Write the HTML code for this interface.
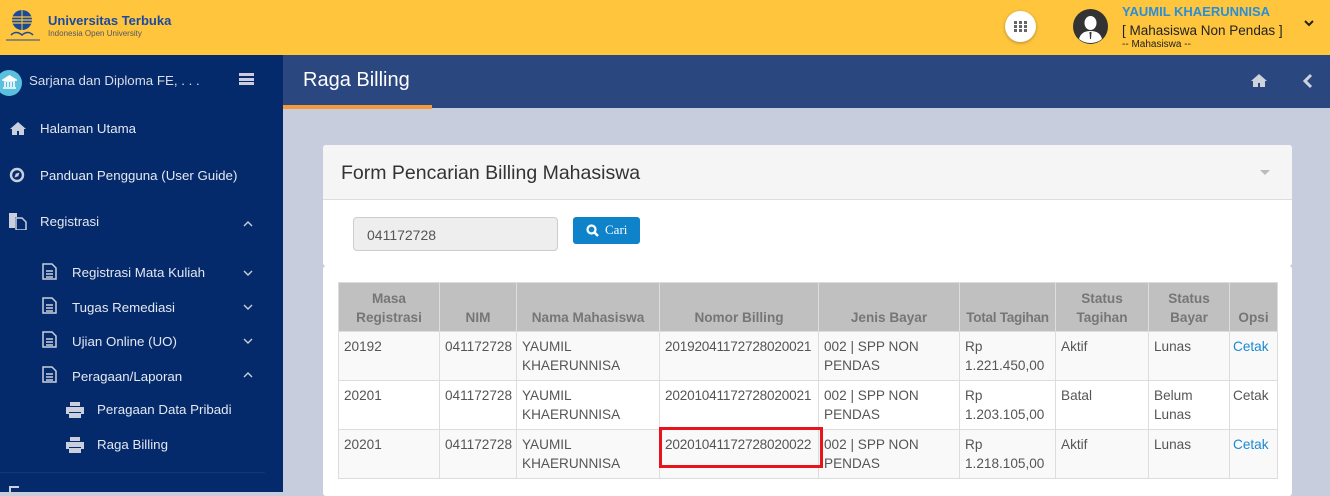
<!DOCTYPE html>
<html><head><meta charset="utf-8"><style>
*{box-sizing:border-box;margin:0;padding:0}
body{width:1330px;height:492px;overflow:hidden;font-family:"Liberation Sans",sans-serif;background:#c7cddc;position:relative}
.top{position:absolute;left:0;top:0;width:1330px;height:55px;background:#fec53d}
.side{position:absolute;left:0;top:55px;width:283px;height:437px;background:#042a6b;color:#e4e8f0;font-size:13.3px}
.bar{position:absolute;left:283px;top:55px;width:1047px;height:53px;background:#2a4780}
.item{position:absolute;white-space:nowrap}
table{border-collapse:collapse;position:absolute;left:338px;top:282px;width:939px;font-size:13.6px;color:#555;table-layout:fixed}
td,th{border:1px solid #ddd;padding:5px 5px;vertical-align:top;line-height:19px;text-align:left;overflow:hidden;white-space:normal}
th{background:#c0c0c0;color:#767676;text-align:center;vertical-align:bottom;font-weight:bold;padding:4px 2px}
tr.r{height:49px}
td{background:#f9f9f9}
tr:nth-child(3) td{background:#fff}
a{color:#1a8ad0}
</style></head><body>
<div class="top">
 <svg style="position:absolute;left:5px;top:9px" width="36" height="34" viewBox="0 0 36 34"><circle cx="17" cy="11" r="10" fill="#1c4a9a"/><path d="M7 8h20M7 11h20M7 14h20" stroke="#fec53d" stroke-width="1.3"/><path d="M17 1v21" stroke="#fec53d" stroke-width="1"/><path d="M6 26q5-5 11 0q6-5 11 0" stroke="#1c4a9a" fill="none" stroke-width="1.5"/><path d="M1 31h34" stroke="#1c4a9a" stroke-width="1"/></svg>
 <div class="item" style="left:48px;top:13px;font-size:13px;font-weight:bold;color:#1d4aa0">Universitas Terbuka</div>
 <div class="item" style="left:48px;top:29px;font-size:8px;color:#556">Indonesia Open University</div>
 <div style="position:absolute;left:1005px;top:11px;width:31px;height:31px;border-radius:50%;background:#fff;box-shadow:0 1px 3px rgba(0,0,0,.3)"><svg style="position:absolute;left:9px;top:10px" width="13" height="11"><g fill="#666"><rect x="0" y="0" width="3" height="3"/><rect x="5" y="0" width="3" height="3"/><rect x="10" y="0" width="3" height="3"/><rect x="0" y="4" width="3" height="3"/><rect x="5" y="4" width="3" height="3"/><rect x="10" y="4" width="3" height="3"/><rect x="0" y="8" width="3" height="3"/><rect x="5" y="8" width="3" height="3"/><rect x="10" y="8" width="3" height="3"/></g></svg></div>
 <svg style="position:absolute;left:1073px;top:9px" width="35" height="35" viewBox="0 0 35 35"><circle cx="17.5" cy="17.5" r="17.5" fill="#333"/><ellipse cx="17.5" cy="14" rx="6" ry="7" fill="#fff"/><path d="M6 30q2-8 11.5-8q9.5 0 11.5 8q-5 4-11.5 4q-6.5 0-11.5-4z" fill="#fff"/><path d="M16.5 23h2l-.5 7h-1z" fill="#333"/></svg>
 <div class="item" style="left:1122px;top:4px;font-size:13px;font-weight:bold;color:#2a8ed8">YAUMIL KHAERUNNISA</div>
 <div class="item" style="left:1122px;top:23px;font-size:13.5px;color:#222">[ Mahasiswa Non Pendas ]</div>
 <div class="item" style="left:1122px;top:39px;font-size:10px;color:#222">-- Mahasiswa --</div>
 <svg style="position:absolute;left:1304px;top:20px" width="10" height="7"><path d="M1 1l4 4 4-4" stroke="#222" stroke-width="2" fill="none"/></svg>
</div>
<div class="side">
 <div style="position:absolute;left:-4px;top:15px;width:26px;height:26px;border-radius:50%;background:#5bc0de"></div>
 <svg style="position:absolute;left:2px;top:20px" width="15" height="15"><path d="M1 5l6.5-4 6.5 4zM2 6h11M3 7v5M6 7v5M9 7v5M12 7v5M1 13h13" stroke="#fff" stroke-width="1.6" fill="#fff"/></svg>
 <div class="item" style="left:29px;top:18px;color:#d8dde8">Sarjana dan Diploma FE, . . .</div>
 <div style="position:absolute;left:239px;top:18px;width:15px;height:12px;border-top:3px solid #ccd;border-bottom:3px solid #ccd"><div style="margin-top:2px;height:3px;background:#ccd"></div></div>
 <svg style="position:absolute;left:9px;top:66px" width="18" height="15"><path d="M9 1L1 8h2v6h5V10h2v4h5V8h2z" fill="#c9cfdc"/></svg>
 <div class="item" style="left:40px;top:66px">Halaman Utama</div>
 <svg style="position:absolute;left:9px;top:112px" width="16" height="16"><circle cx="8" cy="8" r="6" stroke="#c9cfdc" stroke-width="2.4" fill="none"/><path d="M5.5 10.5l1.2-3.8 3.8-1.2-1.2 3.8z" fill="#c9cfdc"/></svg>
 <div class="item" style="left:40px;top:113px">Panduan Pengguna (User Guide)</div>
 <svg style="position:absolute;left:9px;top:157px" width="18" height="18"><path d="M0 1h8v4h-2v11H0z" fill="#c9cfdc"/><path d="M7 6h6l4 4v8H7z" stroke="#c9cfdc" stroke-width="1.5" fill="none"/></svg>
 <div class="item" style="left:40px;top:159px">Registrasi</div>
 <svg style="position:absolute;left:243px;top:166px" width="10" height="6"><path d="M1 5l4-4 4 4" stroke="#c9cfdc" stroke-width="1.4" fill="none"/></svg>
 <div class="item" style="left:72px;top:210px">Registrasi Mata Kuliah</div>
 <div class="item" style="left:72px;top:245px">Tugas Remediasi</div>
 <div class="item" style="left:72px;top:279px">Ujian Online (UO)</div>
 <div class="item" style="left:72px;top:314px">Peragaan/Laporan</div>
 <svg style="position:absolute;left:42px;top:208px" width="16" height="140"><g stroke="#c9cfdc" stroke-width="1.5" fill="none"><path d="M1 1h9l4 4v11H1z M4 8h7M4 11h7M4 14h7"/><path transform="translate(0,34)" d="M1 1h9l4 4v11H1z M4 8h7M4 11h7M4 14h7"/><path transform="translate(0,68)" d="M1 1h9l4 4v11H1z M4 8h7M4 11h7M4 14h7"/><path transform="translate(0,103)" d="M1 1h9l4 4v11H1z M4 8h7M4 11h7M4 14h7"/></g></svg>
 <svg style="position:absolute;left:243px;top:215px" width="10" height="110"><g stroke="#c9cfdc" stroke-width="1.4" fill="none"><path d="M1 1l4 4 4-4"/><path d="M1 35l4 4 4-4"/><path d="M1 69l4 4 4-4"/><path d="M1 107l4-4 4 4"/></g></svg>
 <svg style="position:absolute;left:66px;top:347px" width="18" height="80"><g fill="#c9cfdc"><path d="M4 0h10v4H4zM0 5h18v7h-3v-2H3v2H0zM3 11h12v5H3z"/><path transform="translate(0,35)" d="M4 0h10v4H4zM0 5h18v7h-3v-2H3v2H0zM3 11h12v5H3z"/></g></svg>
 <div class="item" style="left:97px;top:347px">Peragaan Data Pribadi</div>
 <div class="item" style="left:97px;top:382px">Raga Billing</div>
 <div style="position:absolute;left:0;top:417px;width:265px;height:1px;background:#1a3570"></div>
 <svg style="position:absolute;left:9px;top:431px" width="16" height="8"><path d="M1 8V1h9" stroke="#c9cfdc" stroke-width="2" fill="none"/></svg>
</div>
<div class="bar">
 <div class="item" style="left:20px;top:14px;font-size:20px;color:#fff">Raga Billing</div>
 <div style="position:absolute;left:0;top:50px;width:149px;height:4px;background:#f39a3a"></div>
 <svg style="position:absolute;left:967px;top:18px" width="18" height="15"><path d="M9 1L1 8h2v6h5V10h2v4h5V8h2z" fill="#cfd3dc"/></svg>
 <svg style="position:absolute;left:1020px;top:18px" width="10" height="16"><path d="M8 2L2 8l6 6" stroke="#cfd3dc" stroke-width="3" fill="none"/></svg>
</div>
<div style="position:absolute;left:323px;top:145px;width:969px;height:121px;background:#fff;border-radius:3px">
 <div style="height:55px;background:#f5f5f5;border-bottom:1px solid #ddd;border-radius:3px 3px 0 0"></div>
 <div class="item" style="left:18px;top:17px;font-size:19.5px;color:#333">Form Pencarian Billing Mahasiswa</div>
 <svg style="position:absolute;left:937px;top:25px" width="10" height="6"><path d="M0 0h10L5 5z" fill="#bbb"/></svg>
 <div style="position:absolute;left:30px;top:72px;width:205px;height:34px;background:#eee;border:1px solid #ccc;border-radius:4px;font-size:14px;color:#555;padding:9px 13px">041172728</div>
 <div style="position:absolute;left:250px;top:72px;width:67px;height:27px;background:#0f83c9;border-radius:3px;color:#fff;font-family:'Liberation Serif',serif;font-size:13px;padding:5px 0 0 32px">Cari</div>
 <svg style="position:absolute;left:263px;top:79px" width="13" height="13"><circle cx="5.5" cy="5.5" r="4" stroke="#fff" stroke-width="2.2" fill="none"/><path d="M8.5 8.5l3.5 3.5" stroke="#fff" stroke-width="2.5"/></svg>
</div>
<div style="position:absolute;left:323px;top:266px;width:969px;height:230px;background:#fff;border-radius:3px"></div>
<table>
<colgroup><col style="width:101px"><col style="width:77px"><col style="width:143px"><col style="width:159px"><col style="width:141px"><col style="width:96px"><col style="width:93px"><col style="width:81px"><col style="width:48px"></colgroup>
<tr style="height:49px"><th>Masa Registrasi</th><th>NIM</th><th>Nama Mahasiswa</th><th>Nomor Billing</th><th>Jenis Bayar</th><th style="padding:4px 0;letter-spacing:-0.3px">Total Tagihan</th><th>Status Tagihan</th><th>Status Bayar</th><th>Opsi</th></tr>
<tr class="r"><td>20192</td><td style="padding:5px 2px 5px 5px">041172728</td><td>YAUMIL KHAERUNNISA</td><td style="letter-spacing:-0.2px">20192041172728020021</td><td>002 | SPP NON PENDAS</td><td>Rp 1.221.450,00</td><td>Aktif</td><td>Lunas</td><td style="padding:5px 3px"><a>Cetak</a></td></tr>
<tr class="r"><td>20201</td><td style="padding:5px 2px 5px 5px">041172728</td><td>YAUMIL KHAERUNNISA</td><td style="letter-spacing:-0.2px">20201041172728020021</td><td>002 | SPP NON PENDAS</td><td>Rp 1.203.105,00</td><td>Batal</td><td>Belum Lunas</td><td style="padding:5px 3px">Cetak</td></tr>
<tr class="r"><td>20201</td><td style="padding:5px 2px 5px 5px">041172728</td><td>YAUMIL KHAERUNNISA</td><td style="letter-spacing:-0.2px">20201041172728020022</td><td>002 | SPP NON PENDAS</td><td>Rp 1.218.105,00</td><td>Aktif</td><td>Lunas</td><td style="padding:5px 3px"><a>Cetak</a></td></tr>
</table>
<div style="position:absolute;left:659px;top:427px;width:164px;height:41px;border:3px solid #e8141b"></div>
</body></html>
